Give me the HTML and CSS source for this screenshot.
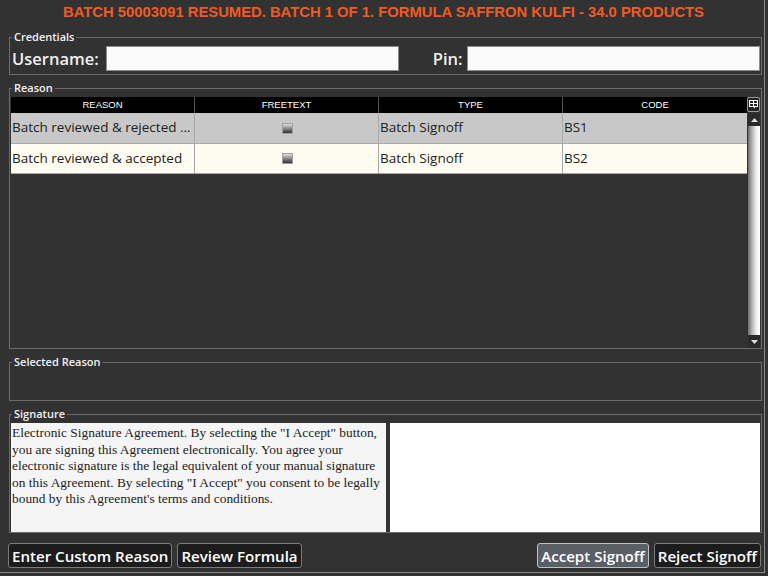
FILE: index.html
```html
<!DOCTYPE html>
<html>
<head>
<meta charset="utf-8">
<link rel="stylesheet" href="styles.css">
</head>
<body>
<div class="window">
  <div class="title">BATCH 50003091 RESUMED. BATCH 1 OF 1. FORMULA SAFFRON KULFI - 34.0 PRODUCTS</div>

  <fieldset class="group creds">
    <legend>Credentials</legend>
    <div class="cred-row">
      <label class="cred-label">Username:</label>
      <div class="input user"></div>
      <label class="cred-label pin-label">Pin:</label>
      <div class="input pin"></div>
    </div>
  </fieldset>

  <fieldset class="group reason">
    <legend>Reason</legend>
    <div class="grid-wrap">
      <div class="grid">
        <div class="grid-head">
          <div class="hcell">REASON</div>
          <div class="hcell">FREETEXT</div>
          <div class="hcell">TYPE</div>
          <div class="hcell">CODE</div>
        </div>
        <div class="grid-row r1">
          <div class="cell">Batch reviewed &amp; rejected ...</div>
          <div class="cell center"><span class="chk"></span></div>
          <div class="cell">Batch Signoff</div>
          <div class="cell">BS1</div>
        </div>
        <div class="grid-row r2">
          <div class="cell">Batch reviewed &amp; accepted</div>
          <div class="cell center"><span class="chk"></span></div>
          <div class="cell">Batch Signoff</div>
          <div class="cell">BS2</div>
        </div>
      </div>
      <div class="side">
        <div class="colbtn">
          <svg width="9" height="9" viewBox="0 0 9 9"><rect x="0.5" y="0.5" width="8" height="6" fill="none" stroke="#fff" stroke-width="1"/><line x1="4.5" y1="0.5" x2="4.5" y2="6.5" stroke="#fff"/><line x1="0.5" y1="3.5" x2="8.5" y2="3.5" stroke="#fff"/><path d="M4 6 L7 6 L5.5 8.5 Z" fill="#fff"/></svg>
        </div>
        <div class="scroll">
          <div class="arrow up"><svg width="7" height="4" viewBox="0 0 7 4"><path d="M0 4 L3.5 0 L7 4 Z" fill="#ddd"/></svg></div>
          <div class="thumb"></div>
          <div class="arrow down"><svg width="7" height="4" viewBox="0 0 7 4"><path d="M0 0 L3.5 4 L7 0 Z" fill="#ddd"/></svg></div>
        </div>
      </div>
    </div>
  </fieldset>

  <fieldset class="group selected">
    <legend>Selected Reason</legend>
    <div class="selected-body"></div>
  </fieldset>

  <fieldset class="group signature">
    <legend>Signature</legend>
    <div class="sig-row">
      <div class="agreement">Electronic Signature Agreement. By selecting the "I Accept" button, you are signing this Agreement electronically. You agree your electronic signature is the legal equivalent of your manual signature on this Agreement. By selecting "I Accept" you consent to be legally bound by this Agreement's terms and conditions.</div>
      <div class="sigpad"></div>
    </div>
  </fieldset>

  <div class="buttons">
    <button class="btn">Enter Custom Reason</button>
    <button class="btn">Review Formula</button>
    <div class="spacer"></div>
    <button class="btn accept">Accept Signoff</button>
    <button class="btn">Reject Signoff</button>
  </div>
</div>
</body>
</html>
```

FILE: styles.css
```css
html, body {
  margin: 0;
  padding: 0;
  background: #323232;
}
.window {
  width: 765px;
  height: 573px;
  border-right: 1px solid #8a8a8a;
  border-bottom: 1px solid #8a8a8a;
  box-sizing: border-box;
  display: flex;
  flex-direction: column;
  padding-left: 9px;
  font-family: "Open Sans", "Liberation Sans", sans-serif;
  color: #f0f0f0;
}
.title {
  height: 28px;
  line-height: 24px;
  text-align: center;
  font-family: "Liberation Sans", Arial, sans-serif;
  font-weight: bold;
  font-size: 14.8px;
  color: #f15a24;
  margin-left: -6px;
}
.group {
  margin: 0;
  padding: 0 1px 0 1px;
  border: 1px solid #6d6d64;
  width: 753px;
  box-sizing: border-box;
  min-width: 0;
}
.group legend {
  font-size: 11px;
  line-height: 14px;
  font-weight: 600;
  padding: 0 2px;
  margin-left: 1px;
  color: #f0f0f0;
}
.creds {
  margin-top: 2px;
}
.cred-row {
  display: flex;
  align-items: center;
  height: 27px;
  padding-top: 1px;
  padding-bottom: 2px;
}
.cred-label {
  font-size: 16.5px;
  font-weight: 600;
  margin-left: 1px;
  margin-right: 7px;
  line-height: 25px;
}
.pin-label {
  margin-left: 34px;
  margin-right: 4px;
}
.input {
  height: 25px;
  box-sizing: border-box;
  background: #fbfbfb;
  border: 1px solid #8c8c8c;
}
.user { width: 293px; }
.pin { width: 293px; }

.reason {
  margin-top: 6px;
}
.grid-wrap {
  display: flex;
  height: 251px;
  padding-top: 2px;
  padding-bottom: 0;
}
.grid {
  width: 736px;
  display: flex;
  flex-direction: column;
}
.grid-head {
  display: grid;
  grid-template-columns: 184px 184px 184px 184px;
  height: 16px;
  background: #000;
}
.hcell {
  font-family: "Liberation Sans", Arial, sans-serif;
  font-size: 9.5px;
  line-height: 16px;
  text-align: center;
  color: #fff;
  border-right: 1px solid #555;
}
.hcell:last-child { border-right: none; }
.grid-row {
  display: grid;
  grid-template-columns: 184px 184px 184px 184px;
  height: 29px;
  border-bottom: 1px solid #a8a8a8;
}
.r1 { background: #c8c8c8; height: 30px; }
.r2 { background: #fefcf0; }
.cell {
  font-size: 13.5px;
  line-height: 29px;
  color: #222;
  padding-left: 1px;
  border-right: 1px solid #a8a8a8;
  white-space: nowrap;
  overflow: hidden;
}
.cell:last-child { border-right: none; }
.center {
  display: flex;
  align-items: center;
  justify-content: center;
}
.chk {
  width: 11px;
  height: 11px;
  box-sizing: border-box;
  border: 1px solid #a0a0a0;
  background: linear-gradient(#e0e0e0, #8a8a8a 50%, #303030);
}
.side {
  width: 14px;
  display: flex;
  flex-direction: column;
  align-items: center;
}
.colbtn {
  width: 13px;
  height: 15px;
  box-sizing: border-box;
  border: 1px solid #9a9a9a;
  border-radius: 2px;
  background: #222;
  display: flex;
  align-items: center;
  justify-content: center;
}
.scroll {
  width: 12px;
  flex: 1;
  display: flex;
  flex-direction: column;
  margin-top: 1px;
  margin-left: 1px;
}
.arrow {
  height: 13px;
  background: #2a2a2a;
  display: flex;
  align-items: center;
  justify-content: center;
}
.thumb {
  flex: 1;
  background: linear-gradient(90deg, #6c6c6c, #b8b8b8 35%, #f0f0f0 70%, #ffffff);
}
.selected {
  margin-top: 6px;
}
.selected-body {
  height: 31px;
}
.signature {
  margin-top: 6px;
}
.sig-row {
  display: flex;
  gap: 4px;
  padding-top: 2px;
  height: 111px;
  box-sizing: border-box;
}
.agreement {
  width: 375px;
  height: 109px;
  background: #f5f5f5;
  font-family: "Liberation Serif", "Times New Roman", serif;
  font-size: 13.4px;
  line-height: 16.5px;
  color: #222;
  padding: 2px 0 0 1px;
  box-sizing: border-box;
}
.sigpad {
  width: 370px;
  height: 109px;
  background: #fff;
}
.buttons {
  display: flex;
  gap: 5px;
  margin-top: 10px;
  margin-left: -1px;
  width: 753px;
}
.spacer { flex: 1; }
.btn {
  height: 25px;
  padding: 0 3px;
  font-family: "Open Sans", "Liberation Sans", sans-serif;
  font-size: 15.1px;
  font-weight: 600;
  color: #fff;
  background: #1c1c1c;
  border: 1px solid #7c7c7c;
  border-radius: 3px;
  line-height: 22px;
}
.accept {
  background: #5a5f66;
  border-color: #b8c0c8;
}
```
